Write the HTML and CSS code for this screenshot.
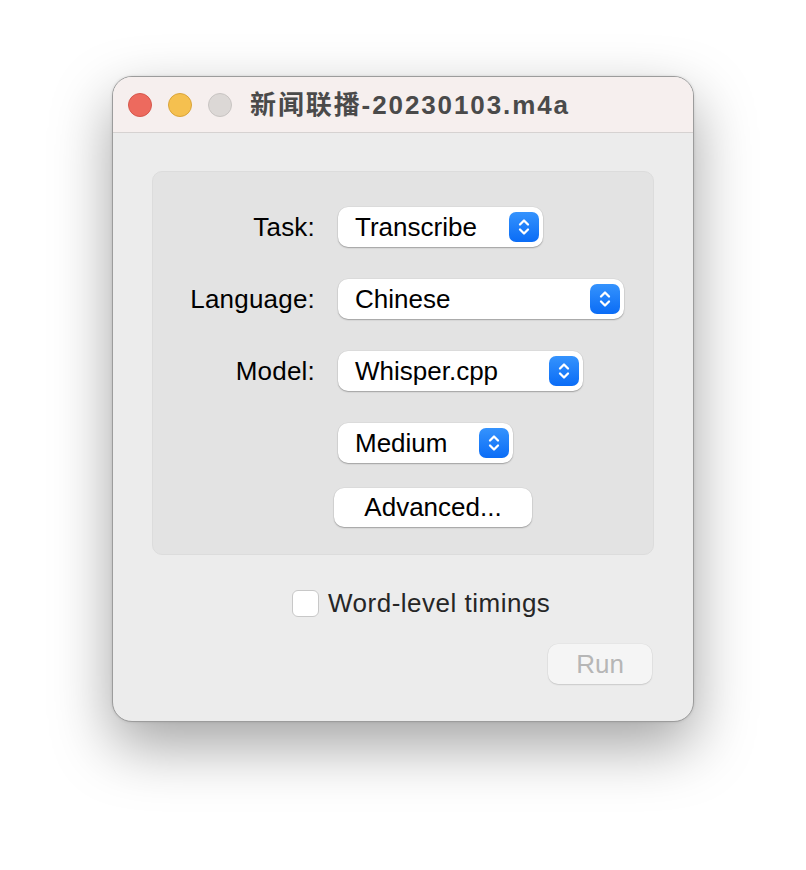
FILE: index.html
```html
<!DOCTYPE html>
<html lang="en">

<head>
    <meta charset="UTF-8">
    <meta name="viewport" content="width=device-width, initial-scale=1.0">
    <title>新闻联播-20230103.m4a</title>
    <link rel="stylesheet" href="styles.css">
</head>

<body>
    <div class="window">
        <header class="titlebar">
            <div class="lights">
                <span class="light light-close"></span>
                <span class="light light-min"></span>
                <span class="light light-zoom"></span>
            </div>
            <h1 class="title">新闻联播-20230103.m4a</h1>
        </header>

        <main class="content">
            <section class="group">
                <label class="field-label">Task:</label>
                <div class="popup popup-task">
                    <span>Transcribe</span>
                    <span class="stepper">
                        <svg viewBox="0 0 30 30" width="30" height="30"><path d="M11 12.5 L15 8.5 L19 12.5 M11 17.5 L15 21.5 L19 17.5" /></svg>
                    </span>
                </div>

                <label class="field-label">Language:</label>
                <div class="popup popup-language">
                    <span>Chinese</span>
                    <span class="stepper">
                        <svg viewBox="0 0 30 30" width="30" height="30"><path d="M11 12.5 L15 8.5 L19 12.5 M11 17.5 L15 21.5 L19 17.5" /></svg>
                    </span>
                </div>

                <label class="field-label">Model:</label>
                <div class="popup popup-model">
                    <span>Whisper.cpp</span>
                    <span class="stepper">
                        <svg viewBox="0 0 30 30" width="30" height="30"><path d="M11 12.5 L15 8.5 L19 12.5 M11 17.5 L15 21.5 L19 17.5" /></svg>
                    </span>
                </div>

                <span></span>
                <div class="popup popup-size">
                    <span>Medium</span>
                    <span class="stepper">
                        <svg viewBox="0 0 30 30" width="30" height="30"><path d="M11 12.5 L15 8.5 L19 12.5 M11 17.5 L15 21.5 L19 17.5" /></svg>
                    </span>
                </div>

                <span></span>
                <button class="btn btn-advanced">Advanced...</button>
            </section>

            <label class="check-row">
                <span class="checkbox"></span>
                <span>Word-level timings</span>
            </label>

            <div class="actions">
                <button class="btn btn-run" disabled>Run</button>
            </div>
        </main>
    </div>
</body>

</html>
```

FILE: styles.css
```css
* {
    box-sizing: border-box;
}

:root {
    --textColor: #000000;
    --titleColor: #4a4a4a;
    --windowBg: #ececec;
    --groupBg: #e3e3e3;
    --blueTop: #3593fd;
    --blueBottom: #0a6cf6;
    --control-shadow: rgba(0, 0, 0, 0.28) 0 1px 1.5px, rgba(0, 0, 0, 0.06) 0 0 0 0.5px;
}

html {
    height: 100%;
    background: #ffffff;
}

body {
    margin: 0;
    min-height: 870px;
    font-family: "Liberation Sans", "Noto Sans CJK SC", sans-serif;
    color: var(--textColor);
    padding: 76px 0 0 112px;
}

.window {
    width: 582px;
    height: 646px;
    border: 1px solid #9c9c9c;
    border-radius: 20px;
    background: var(--windowBg);
    overflow: hidden;
    box-shadow: rgba(0, 0, 0, 0.36) 0 24px 60px, rgba(0, 0, 0, 0.12) 0 0 3px;
    display: flex;
    flex-direction: column;
}

.titlebar {
    height: 56px;
    flex-shrink: 0;
    background: #f6efee;
    border-bottom: 1px solid #d6d2d1;
    display: flex;
    align-items: center;
    padding-left: 15px;
    gap: 18px;
}

.lights {
    display: flex;
    gap: 16px;
}

.light {
    width: 24px;
    height: 24px;
    border-radius: 50%;
}

.light-close {
    background: #ed6a5e;
    border: 1px solid #d5574c;
}

.light-min {
    background: #f5c04f;
    border: 1px solid #d9a43a;
}

.light-zoom {
    background: #dcd8d6;
    border: 1px solid #c8c4c2;
}

.title {
    margin: 0;
    font-size: 26px;
    font-weight: 700;
    letter-spacing: 1.9px;
    color: var(--titleColor);
    line-height: 1;
}

.content {
    flex: 1;
    padding: 38px 39px 0 39px;
    display: flex;
    flex-direction: column;
}

.group {
    height: 384px;
    background: var(--groupBg);
    border: 1px solid #dcdcdc;
    border-radius: 10px;
    padding: 35px 0 0 0;
    display: grid;
    grid-template-columns: 162px 1fr;
    grid-auto-rows: 40px;
    column-gap: 23px;
    row-gap: 32px;
    align-items: center;
}

.field-label {
    justify-self: end;
    font-size: 26px;
    letter-spacing: 0.2px;
}

.popup {
    height: 40px;
    background: #ffffff;
    border-radius: 10px;
    box-shadow: var(--control-shadow);
    display: flex;
    align-items: center;
    justify-content: space-between;
    padding: 0 4px 0 17px;
    font-size: 26px;
}

.popup-task {
    width: 205px;
}

.popup-language {
    width: 286px;
}

.popup-model {
    width: 245px;
}

.popup-size {
    width: 175px;
}

.stepper {
    width: 30px;
    height: 30px;
    border-radius: 7px;
    background: linear-gradient(var(--blueTop), var(--blueBottom));
    display: flex;
}

.stepper path {
    fill: none;
    stroke: #ffffff;
    stroke-width: 2.3;
    stroke-linecap: round;
    stroke-linejoin: round;
}

.btn {
    font-family: "Liberation Sans", sans-serif;
    font-size: 26px;
    height: 39px;
    border: 0;
    border-radius: 10px;
    background: #ffffff;
    color: var(--textColor);
    box-shadow: var(--control-shadow);
    padding: 0;
}

.btn-advanced {
    width: 198px;
    margin: -7px 0 0 -4px;
    justify-self: start;
    align-self: start;
}

.check-row {
    margin: 33px 0 0 140px;
    display: flex;
    align-items: center;
    gap: 9px;
    font-size: 26px;
    letter-spacing: 0.5px;
    color: #262626;
}

.checkbox {
    width: 27px;
    height: 27px;
    background: #ffffff;
    border: 1px solid #c8c8c8;
    border-radius: 6px;
}

.actions {
    display: flex;
    justify-content: flex-end;
    margin-top: 25px;
    padding-right: 2px;
}

.btn-run {
    width: 104px;
    height: 40px;
    background: #f5f5f5;
    color: #b6b6b6;
    box-shadow: rgba(0, 0, 0, 0.12) 0 1px 1.5px, rgba(0, 0, 0, 0.05) 0 0 0 0.5px;
}
```
